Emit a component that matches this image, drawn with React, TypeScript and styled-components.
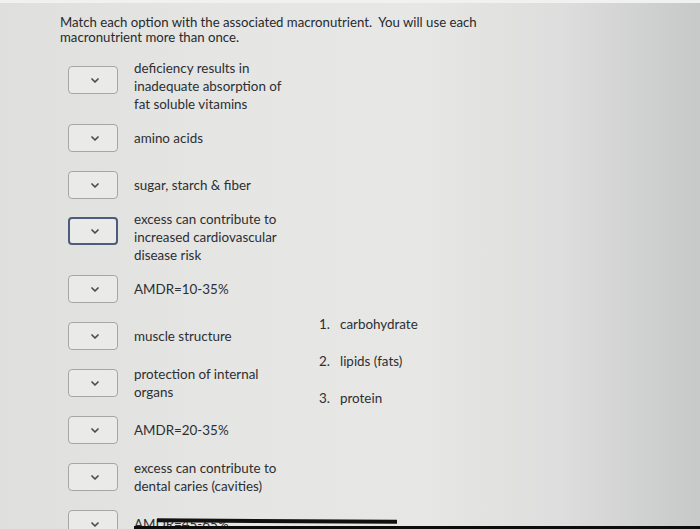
import React from "react";
import styled, { createGlobalStyle } from "styled-components";

const GlobalStyle = createGlobalStyle`
  html, body {
    margin: 0;
    padding: 0;
  }
  body {
    font-family: Lato, "Open Sans", sans-serif;
    color: #2c2f32;
  }
`;

const Page = styled.div`
  position: relative;
  width: 700px;
  height: 529px;
  overflow: hidden;
  box-sizing: border-box;
  padding: 12px 0 0 60px;
  border-top: 3px solid #f1f1ef;
  background: linear-gradient(
    90deg,
    #dfdfdd 0%,
    #e5e5e3 30%,
    #e7e7e5 60%,
    #dddedd 80%,
    #c7c8c8 100%
  );
`;

const Prompt = styled.p`
  margin: 0 0 22px;
  width: 440px;
  font-size: 13.2px;
  line-height: 15px;
  color: #272a2d;
`;

const Question = styled.div`
  display: flex;
  align-items: flex-start;
`;

const Matches = styled.div`
  display: flex;
  flex-direction: column;
  gap: 19px;
  width: 251px;
  margin-left: 8px;
`;

const Row = styled.div`
  display: flex;
  align-items: center;
  gap: 16px;
`;

const Select = styled.div<{ $focused?: boolean; $top?: boolean }>`
  flex: none;
  box-sizing: border-box;
  width: 50px;
  height: 28px;
  display: flex;
  align-items: center;
  justify-content: flex-end;
  padding-right: ${({ $focused }) => ($focused ? "17px" : "18px")};
  border: ${({ $focused }) =>
    $focused ? "2px solid #4d5c78" : "1px solid #a5a6a6"};
  border-radius: 4px;
  background: #eaeae8;
  align-self: ${({ $top }) => ($top ? "flex-start" : "center")};
  margin-top: ${({ $top }) => ($top ? "-1px" : "0")};
`;

const Label = styled.div`
  width: 162px;
  margin: -8px 0;
  font-size: 13.4px;
  line-height: 18px;
`;

const Answers = styled.ol`
  list-style: none;
  margin: 0;
  padding: 248px 0 0;
  display: flex;
  flex-direction: column;
  gap: 19px;
`;

const Answer = styled.li`
  display: flex;
  font-size: 13.4px;
  line-height: 18px;
`;

const Num = styled.span`
  width: 21px;
  flex: none;
`;

/* screen bezel creeping in over the bottom of the page */
const BezelLine = styled.div`
  position: absolute;
  left: 157px;
  top: 516px;
  width: 240px;
  height: 4px;
  background: #111;
  transform: rotate(0.3deg);
`;

const Bezel = styled.div`
  position: absolute;
  left: 134px;
  right: 0;
  top: 523px;
  height: 10px;
  background: #0c0c0c;
`;

const Chevron = () => (
  <svg width="8" height="5" viewBox="0 0 8 5">
    <polyline
      points="1,1 4,4 7,1"
      fill="none"
      stroke="#4a4e52"
      strokeWidth="1.7"
      strokeLinecap="round"
      strokeLinejoin="round"
    />
  </svg>
);

type Item = { text: string; lines: number; focused?: boolean };

const items: Item[] = [
  { text: "deficiency results in inadequate absorption of fat soluble vitamins", lines: 3 },
  { text: "amino acids", lines: 1 },
  { text: "sugar, starch & fiber", lines: 1 },
  { text: "excess can contribute to increased cardiovascular disease risk", lines: 3, focused: true },
  { text: "AMDR=10-35%", lines: 1 },
  { text: "muscle structure", lines: 1 },
  { text: "protection of internal organs", lines: 2 },
  { text: "AMDR=20-35%", lines: 1 },
  { text: "excess can contribute to dental caries (cavities)", lines: 2 },
  { text: "AMDR=45-65%", lines: 1 },
];

const answers = ["carbohydrate", "lipids (fats)", "protein"];

export default function App() {
  return (
    <>
      <GlobalStyle />
      <Page>
        <Prompt>
          Match each option with the associated macronutrient.&nbsp; You will
          use each macronutrient more than once.
        </Prompt>
        <Question>
          <Matches>
            {items.map((item) => (
              <Row key={item.text}>
                <Select $focused={item.focused} $top={item.lines > 2}>
                  <Chevron />
                </Select>
                <Label>{item.text}</Label>
              </Row>
            ))}
          </Matches>
          <Answers>
            {answers.map((a, i) => (
              <Answer key={a}>
                <Num>{i + 1}.</Num>
                {a}
              </Answer>
            ))}
          </Answers>
        </Question>
        <BezelLine />
        <Bezel />
      </Page>
    </>
  );
}
